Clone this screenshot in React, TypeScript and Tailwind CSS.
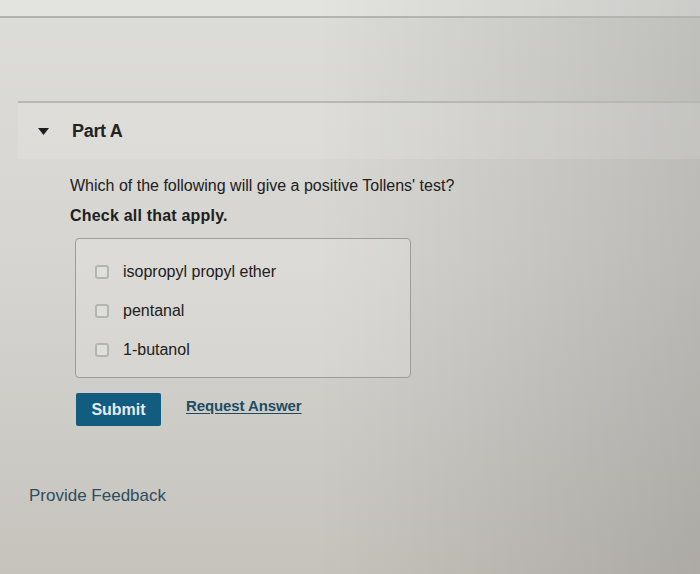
import React from "react";

const options = ["isopropyl propyl ether", "pentanal", "1-butanol"];

export default function App() {
  return (
    <div
      className="w-[700px] h-[574px] overflow-hidden flex flex-col bg-[linear-gradient(to_right,rgba(0,0,0,0)_45%,rgba(0,0,0,0.13)),linear-gradient(to_bottom,#dcdcd8,#d6d5d1_45%,#c6c3bd)]"
      style={{ fontFamily: '"Liberation Sans", Arial, Helvetica, sans-serif' }}
    >
      <div className="h-[16px] shrink-0 bg-white/20" />
      <div className="h-[85px] shrink-0 border-t-2 border-[#b3b3af]" />
      <div className="ml-[18px] border-t-2 border-[#b8b8b3] flex flex-col">
        <div className="h-[56px] flex items-center bg-white/10">
          <svg width="11" height="7" viewBox="0 0 11 7" className="ml-[20px]">
            <polygon points="0,0 11,0 5.5,7" fill="#1e1e1e" />
          </svg>
          <span className="ml-[23px] text-[18px] font-bold text-[#232323] tracking-[-0.3px]">Part A</span>
        </div>
        <div className="pl-[52px] pt-[17px] flex flex-col items-start">
          <p className="text-[16px] leading-[20px] text-[#202020]">
            Which of the following will give a positive Tollens' test?
          </p>
          <p className="mt-[10px] text-[16px] leading-[20px] font-bold text-[#202020] tracking-[0.2px]">
            Check all that apply.
          </p>
          <div className="mt-[12px] ml-[5px] w-[336px] h-[140px] border border-[#9c9c99] rounded-[4px] bg-white/15 pt-[13px] pl-[19px] flex flex-col">
            {options.map((o) => (
              <label key={o} className="h-[39px] flex items-center">
                <span className="w-[14px] h-[14px] rounded-[3px] border-2 border-[#b4b4b0] bg-[#dededa]" />
                <span className="ml-[14px] text-[16px] text-[#202020]">{o}</span>
              </label>
            ))}
          </div>
          <div className="mt-[15px] ml-[6px] flex items-center">
            <button className="w-[85px] h-[33px] rounded-[2px] bg-[#125c80] text-[#e4ecef] text-[16px] font-bold">
              Submit
            </button>
            <a className="ml-[25px] mb-[6px] text-[15px] font-bold text-[#1e4c62] underline underline-offset-2 tracking-[-0.1px]">
              Request Answer
            </a>
          </div>
        </div>
        <div className="mt-[57px] pl-[11px] text-[17px] text-[#2d4e5e]">Provide Feedback</div>
      </div>
    </div>
  );
}
